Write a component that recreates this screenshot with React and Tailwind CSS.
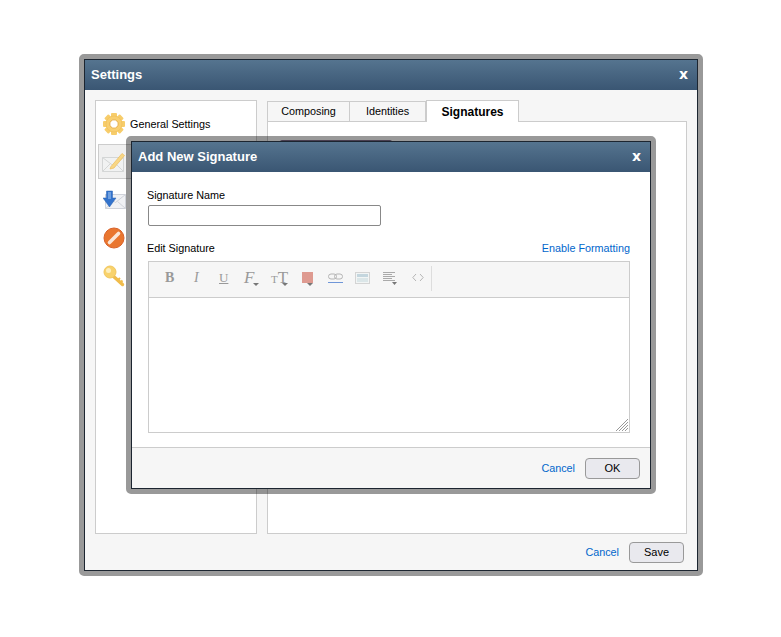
function Gear() {
  const teeth = [0, 45, 90, 135, 180, 225, 270, 315];
  return (
    <svg width="22" height="22" viewBox="0 0 22 22">
      {teeth.map((a) => (
        <rect key={a} x="8" y="0" width="6" height="5" rx="1" fill="#f7cd6b" transform={`rotate(${a} 11 11)`} />
      ))}
      <circle cx="11" cy="11" r="8" fill="#f8cf70" stroke="#f0bd55" strokeWidth="0.6" />
      <circle cx="11" cy="11" r="4.2" fill="#fff" stroke="#e8b04c" />
    </svg>
  );
}

function MailPencil() {
  return (
    <svg width="23" height="22" viewBox="0 0 23 22">
      <path d="M0.500 6.500h21v14h-21z" fill="#f1f2f2" stroke="#d4d6d6" />
      <path d="M0.500 6.500l10.500 8 10.500-8M0.500 20.500l8-8M21.500 20.500l-8-8" fill="none" stroke="#d4d6d6" />
      <path d="M9 15.500L20 2.500l2.500 2L12 17l-4 1z" fill="#f8d785" stroke="#ecbc5c" strokeWidth="0.7" />
    </svg>
  );
}

function MailDown() {
  return (
    <svg width="23" height="20" viewBox="0 0 23 20">
      <path d="M2.500 4.500h20v14h-20z" fill="#f0f1f4" stroke="#d0d3da" />
      <path d="M2.500 4.500l10 8 10-8M2.500 18.500l8-7M22.500 18.500l-8-7" fill="none" stroke="#d0d3da" />
      <path d="M3.500 1h6v7h3.500L6.500 17 0 8h3.500z" fill="#3373cc" stroke="#2a62b2" strokeWidth="0.5" />
      <path d="M5 2h3v7H5z" fill="#6e9fe0" />
    </svg>
  );
}

function Ban() {
  return (
    <svg width="22" height="22" viewBox="0 0 22 22">
      <circle cx="11" cy="11" r="10" fill="#e9762f" stroke="#d9622a" />
      <path d="M6.500 15.500l9-9" stroke="#fbe6d6" strokeWidth="3.600" strokeLinecap="round" />
    </svg>
  );
}

function Key() {
  return (
    <svg width="22" height="22" viewBox="0 0 22 22">
      <path d="M9 10l10.500 9.500" stroke="#f0bc4c" strokeWidth="3.400" strokeLinecap="round" />
      <path d="M15 15l2-2M17.500 17.500l2-2" stroke="#f0bc4c" strokeWidth="2" />
      <circle cx="7" cy="7" r="6" fill="#f8d26c" stroke="#f2c65c" />
      <circle cx="5.500" cy="5.500" r="2.500" fill="#fdeebc" />
    </svg>
  );
}

function Caret({ className }) {
  return <span className={`absolute right-0 h-0 w-0 border-x-[3px] border-t-[3px] border-x-transparent border-t-[#777] ${className}`} />;
}

function Toolbar() {
  return (
    <div className="flex h-[36px] items-start border-b border-[#ccc] bg-[#f6f6f6] font-['Liberation_Serif',serif] text-[#999]">
      <div className="flex h-[31px] items-center pl-[16px]">
        <span className="w-[27px] text-[14px] font-bold leading-none">B</span>
        <span className="w-[27px] pl-[2px] text-[14px] italic leading-none">I</span>
        <span className="w-[25px] text-[13px] leading-none underline">U</span>
        <span className="relative mr-[12px] w-[15px] text-[17px] italic leading-none">
          F<Caret className="bottom-0" />
        </span>
        <span className="relative mr-[14px] w-[17px] whitespace-nowrap leading-none">
          <span className="text-[11px]">T</span>
          <span className="text-[17px]">T</span>
          <Caret className="bottom-0" />
        </span>
        <span className="relative mr-[15px] -mt-px h-[11px] w-[11px] bg-[#de9a90]">
          <Caret className="bottom-[-3px]" />
        </span>
        <svg className="mr-[12px]" width="15" height="12" viewBox="0 0 15 12">
          <rect x="0.500" y="2" width="8" height="5" rx="2.500" fill="none" stroke="#b5b5b5" />
          <rect x="6.500" y="2" width="8" height="5" rx="2.500" fill="none" stroke="#b5b5b5" />
          <path d="M0 10.500h15" stroke="#6f96d8" />
        </svg>
        <svg className="mr-[13px]" width="15" height="12" viewBox="0 0 15 12">
          <rect x="0.500" y="0.500" width="14" height="11" fill="#f2f5f5" stroke="#d4d4d4" />
          <rect x="2" y="2" width="11" height="3" fill="#c4d6de" />
          <rect x="2" y="6" width="11" height="4" fill="#dbe6e8" />
        </svg>
        <svg className="mr-[15px]" width="14" height="14" viewBox="0 0 14 14">
          <path d="M0 1.500h12M0 3.500h9M0 5.500h12M0 7.500h9M0 9.500h12" stroke="#aaa" />
          <path d="M9 11h5l-2.500 3z" fill="#777" />
        </svg>
        <svg className="mr-[7px]" width="12" height="9" viewBox="0 0 12 9">
          <path d="M4 1L0.800 4.500 4 8M8 1l3.200 3.500L8 8" fill="none" stroke="#b5b5b5" />
        </svg>
      </div>
      <div className="mt-[4px] h-[25px] w-px bg-[#ddd]" />
    </div>
  );
}

function GreyButton({ children }) {
  return (
    <button className="h-[21px] w-[55px] rounded-[4px] border border-[#999] bg-[#e9e9ee] text-[11px] text-black">
      {children}
    </button>
  );
}

function TitleBar({ title }) {
  return (
    <div className="flex h-[30px] items-center justify-between bg-gradient-to-b from-[#55748f] to-[#3a5673] pl-[6px] pr-[9px] text-white">
      <span className="text-[13px] font-bold">{title}</span>
      <span className="-mt-[2px] font-['DejaVu_Sans',sans-serif] text-[14px] font-bold leading-none">x</span>
    </div>
  );
}

function SidebarRow({ icon, label, selected }) {
  return (
    <div className="h-[38px]">
      <div className={`ml-[2px] flex h-[35px] items-center gap-[5px] ${selected ? "border border-[#ccc] bg-[#f0f0f0] pl-[3px]" : "pl-[5px]"}`}>
        {icon}
        {label && <span className="mt-px text-black">{label}</span>}
      </div>
    </div>
  );
}

export default function App() {
  return (
    <div className="h-[637px] w-[781px] overflow-hidden bg-white pl-[79px] pt-[54px] font-['Liberation_Sans',sans-serif] text-[10.8px]">
      <div className="relative h-[522px] w-[624px] rounded-[5px] border-[5px] border-black/40 bg-clip-padding">
        <div className="flex h-full flex-col border border-[#1c2530] bg-[#f6f6f6]">
          <TitleBar title="Settings" />
          <div className="flex h-[444px] gap-[10px] px-[10px] pt-[10px]">
            <div className="w-[162px] border border-[#ccc] bg-white pt-[5px]">
              <SidebarRow icon={<Gear />} label="General Settings" />
              <SidebarRow icon={<MailPencil />} selected />
              <SidebarRow icon={<MailDown />} />
              <SidebarRow icon={<Ban />} />
              <SidebarRow icon={<Key />} />
            </div>
            <div className="flex w-[420px] flex-col">
              <div className="flex h-[22px] text-black">
                <div className="mt-px flex w-[83px] items-center justify-center border border-[#ccc]">Composing</div>
                <div className="mt-px flex w-[76px] items-center justify-center border-y border-r border-[#ccc]">Identities</div>
                <div className="relative z-10 flex h-[22px] w-[93px] items-center justify-center border-x border-t border-[#ccc] bg-white text-[12px] font-bold">
                  Signatures
                </div>
              </div>
              <div className="-mt-px flex-1 border border-[#ccc] bg-white pl-[12px] pt-[18px]">
                <div className="h-[30px] w-[112px] rounded-[2px] bg-[#7b6a86]" />
              </div>
            </div>
          </div>
          <div className="flex flex-1 items-center justify-end gap-[10px] pr-[13px]">
            <span className="text-[#0066cc]">Cancel</span>
            <GreyButton>Save</GreyButton>
          </div>
        </div>

        <div className="absolute left-[42px] top-[77px] z-20 h-[358px] w-[530px] rounded-[5px] border-[5px] border-black/40 bg-clip-padding">
          <div className="flex h-full flex-col border border-[#1c2530] bg-white">
            <TitleBar title="Add New Signature" />
            <div className="flex-1 px-[16px] text-black">
              <div className="-ml-px mt-[15px] leading-[16px]">Signature Name</div>
              <div className="mt-[2px] h-[21px] w-[233px] rounded-[2px] border border-[#888] bg-white" />
              <div className="-ml-px mt-[14px] flex justify-between pr-[4px] leading-[16px]">
                <span>Edit Signature</span>
                <span className="text-[#0066cc]">Enable Formatting</span>
              </div>
              <div className="relative mt-[5px] h-[172px] w-[482px] border border-[#ccc] bg-white">
                <Toolbar />
                <svg className="absolute bottom-0 right-0" width="14" height="14" viewBox="0 0 14 14">
                  <path d="M1 13L13 1M4 13L13 4M7 13l6-6M10 13l3-3" stroke="#999" />
                </svg>
              </div>
            </div>
            <div className="flex h-[41px] items-center justify-end gap-[10px] border-t border-[#ccc] bg-[#f6f6f6] pr-[10px]">
              <span className="text-[#0066cc]">Cancel</span>
              <GreyButton>OK</GreyButton>
            </div>
          </div>
        </div>
      </div>
    </div>
  );
}
